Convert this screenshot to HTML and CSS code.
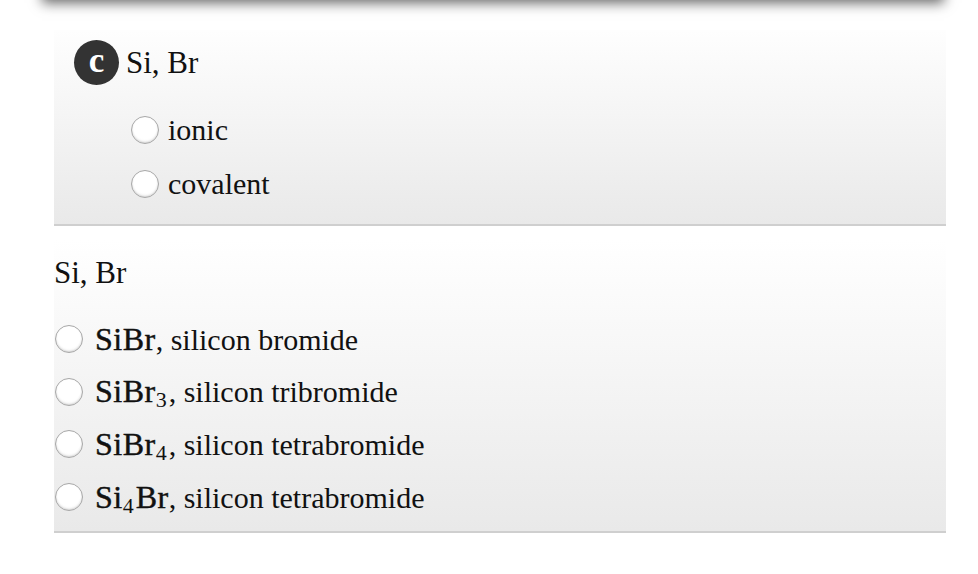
FILE: index.html
```html
<!DOCTYPE html>
<html>
<head>
<meta charset="utf-8">
<link rel="stylesheet" href="styles.css">
</head>
<body>
<div class="topbar"></div>
<div class="panel panel-c">
  <div class="qhead">
    <span class="badge">c</span>
    <span class="qtext">Si, Br</span>
  </div>
  <div class="opts opts-indent">
    <label class="opt"><span class="radio"></span><span>ionic</span></label>
    <label class="opt"><span class="radio"></span><span>covalent</span></label>
  </div>
</div>
<div class="panel panel-2">
  <div class="qtext q2">Si, Br</div>
  <div class="opts opts-2">
    <label class="opt"><span class="radio"></span><span><span class="f">SiBr</span>, silicon bromide</span></label>
    <label class="opt"><span class="radio"></span><span><span class="f">SiBr<sub>3</sub></span>, silicon tribromide</span></label>
    <label class="opt"><span class="radio"></span><span><span class="f">SiBr<sub>4</sub></span>, silicon tetrabromide</span></label>
    <label class="opt"><span class="radio"></span><span><span class="f">Si<sub>4</sub>Br</span>, silicon tetrabromide</span></label>
  </div>
</div>
</body>
</html>
```
FILE: styles.css
```css
html, body {
  margin: 0;
  padding: 0;
  background: #fff;
  overflow: hidden;
}
body {
  font-family: "Liberation Serif", "Times New Roman", serif;
  color: #111;
  width: 978px;
  height: 574px;
}
.topbar {
  margin: -40px 34px 0 42px;
  height: 40px;
  background: #666;
  box-shadow: 0 3px 12px rgba(0,0,0,0.6);
}
.panel {
  margin-left: 54px;
  width: 892px;
  box-sizing: border-box;
  background: linear-gradient(#fefefe, #e9e9e9);
  border-bottom: 2px solid #cfcfcf;
}
.panel-c {
  margin-top: 30px;
  height: 196px;
  padding-top: 10px;
}
.qhead {
  display: flex;
  align-items: center;
  padding-left: 20px;
  gap: 7px;
}
.badge {
  width: 45px;
  height: 45px;
  border-radius: 50%;
  background: #333;
  color: #fff;
  font-weight: bold;
  font-size: 35px;
  display: flex;
  align-items: center;
  justify-content: center;
  line-height: 1;
  padding-bottom: 5px;
  box-sizing: border-box;
}
.qtext {
  font-size: 31px;
}
.opts {
  display: flex;
  flex-direction: column;
}
.opts-indent {
  padding-left: 77px;
  margin-top: 26px;
  gap: 16px;
}
.opt {
  display: flex;
  align-items: center;
  gap: 9px;
  font-size: 30px;
  height: 38px;
}
.radio {
  width: 28px;
  height: 28px;
  box-sizing: border-box;
  border-radius: 50%;
  border: 1px solid #a8a8a8;
  background: radial-gradient(circle at 50% 40%, #fff 55%, #f0f0f0 100%);
  box-shadow: inset 0 -1px 2px rgba(0,0,0,0.15);
  flex: none;
}
.panel-2 {
  margin-top: 14px;
  height: 293px;
  padding-top: 16px;
  background: linear-gradient(#fff, #e9e9e9);
}
.q2 {
  height: 34px;
  line-height: 34px;
}
.opts-2 {
  margin-top: 30px;
  padding-left: 1px;
  gap: 14.7px;
}
.opts-2 .opt {
  gap: 12px;
}
.f {
  font-size: 32px;
  letter-spacing: 0.5px;
  -webkit-text-stroke: 0.45px #111;
}
.f sub {
  font-size: 22px;
  letter-spacing: 0;
  vertical-align: -5px;
  line-height: 0;
  margin: 0 2px 0 0;
  -webkit-text-stroke: 0;
}
```
